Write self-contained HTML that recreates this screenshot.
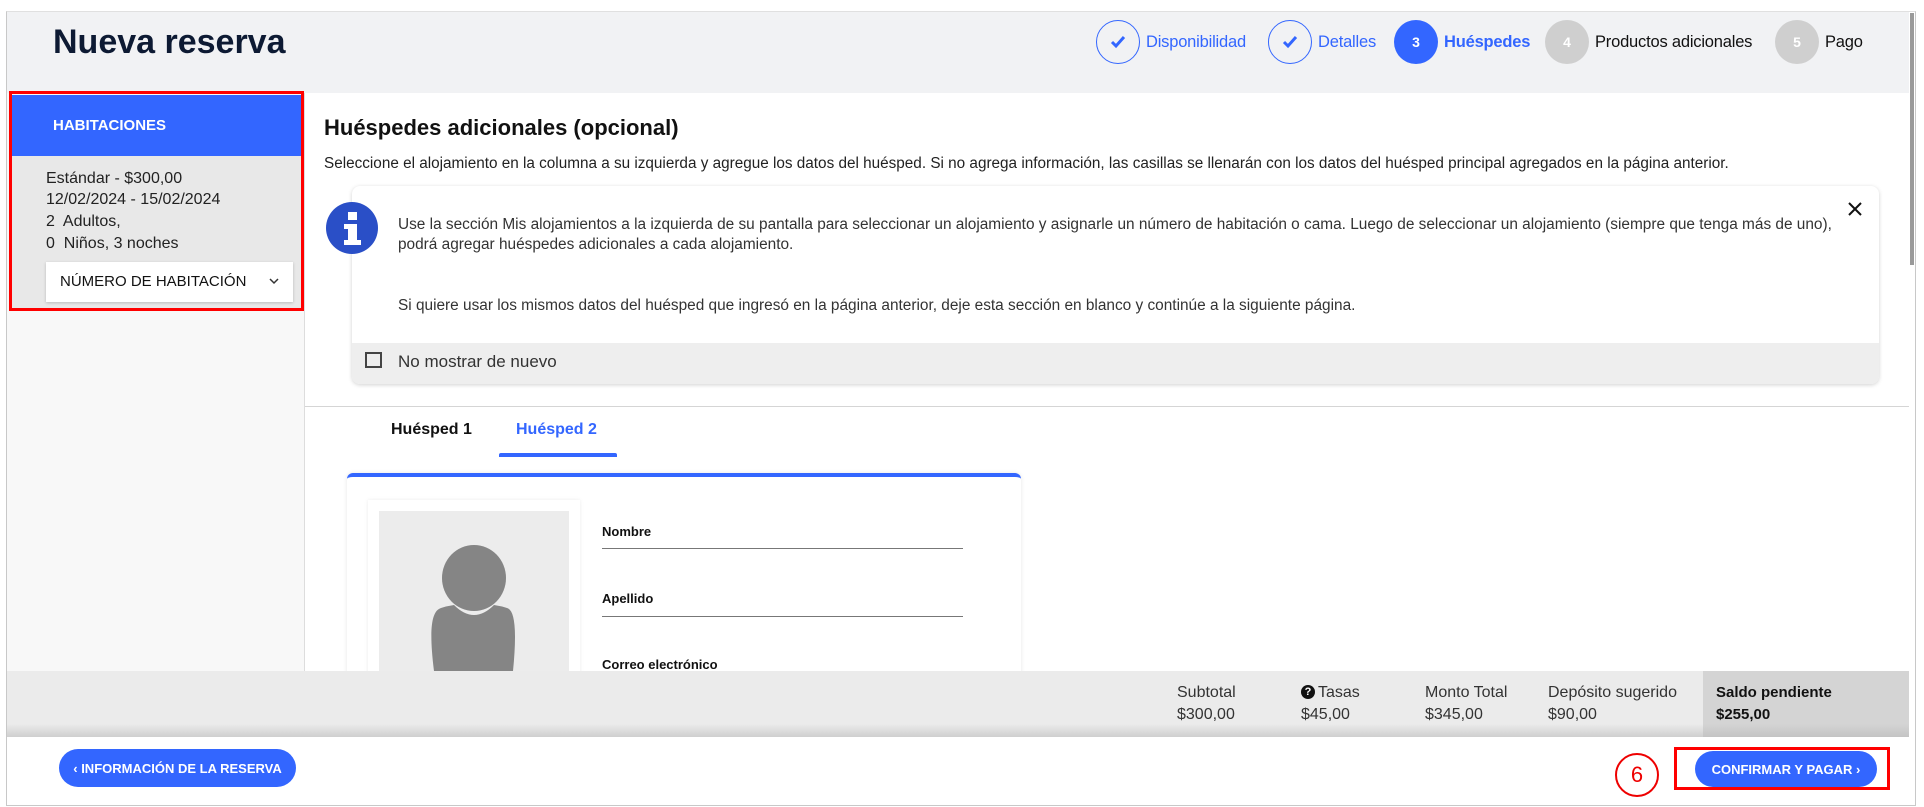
<!DOCTYPE html><html><head><meta charset="utf-8"><style>
*{margin:0;padding:0;box-sizing:border-box}
body{width:1924px;height:807px;background:#fff;font-family:"Liberation Sans",sans-serif;position:relative;overflow:hidden;color:#1a1a2e}
.a{position:absolute}
.t{position:absolute;white-space:nowrap;line-height:1}
.circ{position:absolute;width:44px;height:44px;border-radius:50%;top:20px;display:flex;align-items:center;justify-content:center;font-weight:bold;font-size:14px;color:#fff}
.st{position:absolute;top:33px;font-size:16.5px;letter-spacing:-0.2px}
.f{font-size:16px;color:#333}
.i{font-size:15.4px;color:#333}
</style></head><body>
<div class="a" style="left:6px;top:11px;width:1910px;height:795px;border:1px solid #c8c8c8;border-top:1px solid #e0e0e0"></div>
<div class="a" style="left:7px;top:12px;width:1902px;height:81px;background:#f1f2f4"></div>
<div class="t" style="left:53px;top:25px;font-size:34px;font-weight:bold;color:#0d1a33">Nueva reserva</div>
<div class="circ" style="left:1096px;border:1.5px solid #3366ff"><svg width="16" height="14"><path d="M2 7 L6 11 L14 2" stroke="#3366ff" stroke-width="3" fill="none"/></svg></div>
<div class="st" style="left:1146px;color:#3366ff">Disponibilidad</div>
<div class="circ" style="left:1268px;border:1.5px solid #3366ff"><svg width="16" height="14"><path d="M2 7 L6 11 L14 2" stroke="#3366ff" stroke-width="3" fill="none"/></svg></div>
<div class="st" style="left:1318px;color:#3366ff">Detalles</div>
<div class="circ" style="left:1394px;background:#3366ff">3</div>
<div class="st" style="left:1444px;color:#3366ff;font-weight:bold">Huéspedes</div>
<div class="circ" style="left:1545px;background:#cfcfcf">4</div>
<div class="st" style="left:1595px;color:#111">Productos adicionales</div>
<div class="circ" style="left:1775px;background:#cfcfcf">5</div>
<div class="st" style="left:1825px;color:#111">Pago</div>
<div class="a" style="left:1910px;top:13px;width:4px;height:252px;background:#9a9a9a"></div>
<!-- left column -->
<div class="a" style="left:7px;top:93px;width:298px;height:578px;background:#f8f8f8;border-right:1px solid #ddd"></div>
<div class="a" style="left:12px;top:95px;width:289px;height:61px;background:#3366ff"></div>
<div class="t" style="left:53px;top:118px;color:#fff;font-weight:bold;font-size:15px">HABITACIONES</div>
<div class="a" style="left:12px;top:156px;width:289px;height:153px;background:#e8e8e8"></div>
<div class="t" style="left:46px;top:171px;font-size:16px;color:#222">Estándar - $300,00</div>
<div class="t" style="left:46px;top:192px;font-size:16px;color:#222">12/02/2024 - 15/02/2024</div>
<div class="t" style="left:46px;top:214px;font-size:16px;color:#222">2&nbsp; Adultos,</div>
<div class="t" style="left:46px;top:236px;font-size:16px;color:#222">0&nbsp; Niños, 3 noches</div>
<div class="a" style="left:46px;top:262px;width:247px;height:40px;background:#fff;box-shadow:0 1px 3px rgba(0,0,0,.2)"></div>
<div class="t" style="left:60px;top:274px;font-size:15px;color:#111">NÚMERO DE HABITACIÓN</div>
<svg class="a" style="left:268px;top:277px" width="12" height="8"><path d="M2 2 L6 6 L10 2" stroke="#333" stroke-width="1.5" fill="none"/></svg>
<div class="a" style="left:9px;top:91px;width:295px;height:220px;border:3px solid #f00"></div>
<!-- main -->
<div class="t" style="left:324px;top:117px;font-size:22px;font-weight:bold;color:#111">Huéspedes adicionales (opcional)</div>
<div class="t" style="left:324px;top:156px;font-size:15.3px;color:#222">Seleccione el alojamiento en la columna a su izquierda y agregue los datos del huésped. Si no agrega información, las casillas se llenarán con los datos del huésped principal agregados en la página anterior.</div>
<div class="a" style="left:352px;top:186px;width:1527px;height:198px;background:#fff;border-radius:8px;box-shadow:0 1px 4px rgba(0,0,0,.18);overflow:hidden">
<div class="a" style="left:0;top:157px;width:100%;height:41px;background:#eeeeee"></div></div>
<div class="a" style="left:326px;top:202px;width:52px;height:52px;border-radius:50%;background:#2a4fc7"></div>
<svg class="a" style="left:326px;top:202px" width="52" height="52"><rect x="22" y="10" width="9" height="8" fill="#fff"/><path d="M18 22 H31 V38 H35 V43 H18 V38 H22 V27 H18 Z" fill="#fff"/></svg>
<div class="t i" style="left:398px;top:217px">Use la sección Mis alojamientos a la izquierda de su pantalla para seleccionar un alojamiento y asignarle un número de habitación o cama. Luego de seleccionar un alojamiento (siempre que tenga más de uno),</div>
<div class="t i" style="left:398px;top:237px">podrá agregar huéspedes adicionales a cada alojamiento.</div>
<div class="t i" style="left:398px;top:298px">Si quiere usar los mismos datos del huésped que ingresó en la página anterior, deje esta sección en blanco y continúe a la siguiente página.</div>
<svg class="a" style="left:1847px;top:201px" width="16" height="16"><path d="M2 2 L14 14 M14 2 L2 14" stroke="#111" stroke-width="2"/></svg>
<div class="a" style="left:365px;top:352px;width:17px;height:16px;border:2px solid #444"></div>
<div class="t" style="left:398px;top:353px;font-size:17px;color:#333">No mostrar de nuevo</div>
<div class="a" style="left:305px;top:406px;width:1604px;height:1px;background:#d5d5d5"></div>
<div class="t" style="left:391px;top:422px;font-size:16px;font-weight:bold;color:#111">Huésped 1</div>
<div class="t" style="left:516px;top:422px;font-size:16px;font-weight:bold;color:#3366ff">Huésped 2</div>
<div class="a" style="left:499px;top:453px;width:118px;height:4px;background:#3366ff;border-radius:2px 2px 0 0"></div>
<div class="a" style="left:347px;top:473px;width:674px;height:210px;border-top:4px solid #3366ff;border-radius:6px;box-shadow:0 0 4px rgba(0,0,0,.1);background:#fff"></div>
<div class="a" style="left:368px;top:500px;width:212px;height:180px;background:#fff;box-shadow:0 0 4px rgba(0,0,0,.08)"></div>
<div class="a" style="left:379px;top:511px;width:190px;height:170px;background:#ececec"></div>
<svg class="a" style="left:379px;top:511px" width="190" height="160"><ellipse cx="95" cy="67" rx="32" ry="33" fill="#858585"/><path d="M55 160 C50 120 52 100 62 97 Q68 95 75 94 Q95 114 115 94 Q122 95 128 97 Q140 100 134 160Z" fill="#858585"/></svg>
<div class="t" style="left:602px;top:525px;font-size:13px;font-weight:bold;color:#111">Nombre</div>
<div class="a" style="left:602px;top:548px;width:361px;height:1px;background:#777"></div>
<div class="t" style="left:602px;top:592px;font-size:13px;font-weight:bold;color:#111">Apellido</div>
<div class="a" style="left:602px;top:616px;width:361px;height:1px;background:#777"></div>
<div class="t" style="left:602px;top:658px;font-size:13px;font-weight:bold;color:#111">Correo electrónico</div>
<!-- footer -->
<div class="a" style="left:7px;top:671px;width:1902px;height:66px;background:linear-gradient(#ebebeb 80%,#cfcfcf)"></div>
<div class="a" style="left:1703px;top:671px;width:206px;height:66px;background:linear-gradient(#d4d4d4 80%,#c4c4c4)"></div>
<div class="t f" style="left:1177px;top:685px">Subtotal</div><div class="t f" style="left:1177px;top:707px">$300,00</div>
<div class="a" style="left:1301px;top:685px;width:14px;height:14px;border-radius:50%;background:#111;color:#fff;font-size:11px;font-weight:bold;text-align:center;line-height:14px">?</div>
<div class="t f" style="left:1318px;top:685px">Tasas</div><div class="t f" style="left:1301px;top:707px">$45,00</div>
<div class="t f" style="left:1425px;top:685px">Monto Total</div><div class="t f" style="left:1425px;top:707px">$345,00</div>
<div class="t f" style="left:1548px;top:685px">Depósito sugerido</div><div class="t f" style="left:1548px;top:707px">$90,00</div>
<div class="t" style="left:1716px;top:685px;font-size:15px;font-weight:bold;color:#111">Saldo pendiente</div><div class="t" style="left:1716px;top:707px;font-size:15px;font-weight:bold;color:#111">$255,00</div>
<div class="a" style="left:59px;top:749px;width:237px;height:38px;border-radius:19px;background:#3366ff;color:#fff;font-weight:bold;font-size:13px;display:flex;align-items:center;justify-content:center">‹ INFORMACIÓN DE LA RESERVA</div>
<div class="a" style="left:1695px;top:751px;width:182px;height:36px;border-radius:18px;background:#3366ff;color:#fff;font-weight:bold;font-size:13px;display:flex;align-items:center;justify-content:center">CONFIRMAR Y PAGAR ›</div>
<div class="a" style="left:1674px;top:747px;width:216px;height:43px;border:3px solid #f00"></div>
<div class="a" style="left:1615px;top:753px;width:44px;height:44px;border-radius:50%;border:2px solid #e00;color:#e00;font-size:22px;display:flex;align-items:center;justify-content:center">6</div>
</body></html>
